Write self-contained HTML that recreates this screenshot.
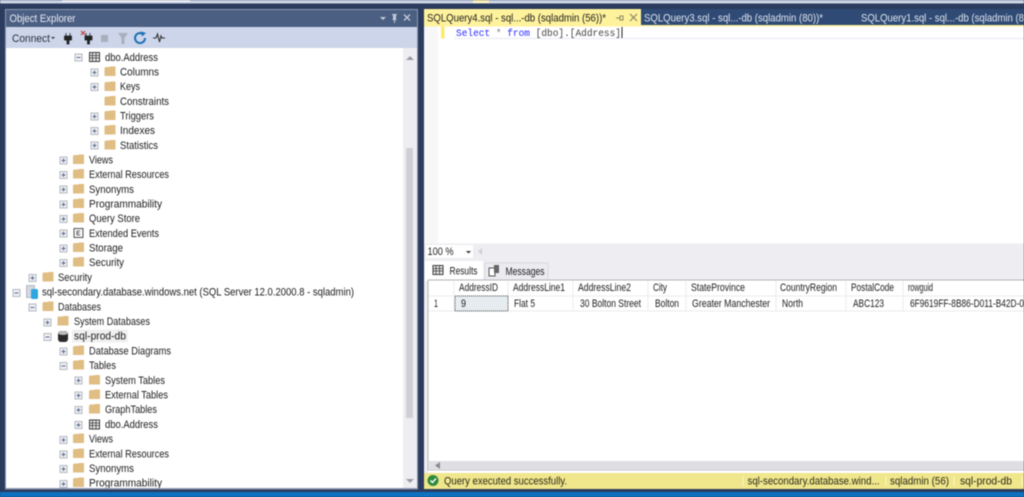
<!DOCTYPE html>
<html><head><meta charset="utf-8"><title>SSMS</title>
<style>
html,body{margin:0;padding:0;background:#2b3c5e;width:1024px;height:497px;overflow:hidden}
svg{display:block;filter:blur(.4px)}
text{font-family:"Liberation Sans",sans-serif;font-size:11.2px;fill:#1c1c1c}
.m{font-family:"Liberation Mono",monospace;font-size:10.500px}
</style></head><body>
<svg width="1024" height="497" viewBox="0 0 1024 497" xmlns="http://www.w3.org/2000/svg">
<defs>
<g id="p"><rect x="-3.500" y="-3.500" width="7" height="7" fill="#eef0f5" stroke="#b4b8c0"/><path d="M-2 0H2M0-2V2" stroke="#5a6a88"/></g>
<g id="n"><rect x="-3.500" y="-3.500" width="7" height="7" fill="#eef0f5" stroke="#b4b8c0"/><path d="M-2 0H2" stroke="#5a6a88"/></g>
<g id="f"><path d="M-5.500-3.500L-4.500-4.500H-0.500L0.500-5H5.500V4.500H-5.500Z" fill="#e0bd82"/></g>
<g id="t"><rect x="-5" y="-4.500" width="10" height="9" fill="#e8e8e8" stroke="#3c3c3c"/><path d="M-5-1.500H5M-5 1H5M-2-4V4M1.500-4V4" stroke="#3c3c3c" stroke-width=".8"/></g>
</defs>
<rect width="1024" height="497" fill="#2b3c5e"/>
<rect width="1024" height="3.500" fill="#ccd3e4"/>
<rect x="62" width="128" height="1.500" fill="#fff"/>
<rect x="473" width="16" height="3" fill="#fff0b8"/>
<rect y="492" width="1024" height="5" fill="#0e70c0"/>

<!-- object explorer -->
<rect x="5" y="9" width="413" height="480" fill="#8c98b2"/>
<rect x="6" y="10" width="411" height="17" fill="#4b5f83"/>
<rect x="6" y="27" width="411" height="21" fill="#ccd5ea"/>
<rect x="6" y="48" width="411" height="440" fill="#fff"/>
<rect x="403" y="48" width="14" height="440" fill="#eeeef2"/>
<rect x="406" y="148" width="7" height="270" fill="#cfcfd5"/>
<path d="M406 60L410 56L414 60ZM406 479L414 479L410 483Z" fill="#9a9aa3"/>
<text x="9.500" y="22" style="fill:#e6eaf2" textLength="66" lengthAdjust="spacingAndGlyphs">Object Explorer</text>
<path d="M380 17H386L383 20ZM392 14H397V15H396V19L397 20H395V23H394V20H392L393 19V15H392Z" fill="#c4cbda"/>
<path d="M404 14.500L410 20.500M410 14.500L404 20.500" stroke="#c4cbda" stroke-width="1.300"/>

<text x="12" y="42" style="fill:#2a3040" textLength="38" lengthAdjust="spacingAndGlyphs">Connect</text>
<path d="M51 37H55L53 39Z" fill="#333"/>
<path d="M66 33V36M70 33V36M64.500 36H71.500V40H69V44H67V40H64.500Z" fill="#222" stroke="#222" stroke-width=".8"/>
<path d="M81 31L85 35M85 31L81 35" stroke="#c0392b"/>
<path d="M86 33V36M90 33V36M85 36H92V40H89.500V44H87.500V40H85Z" fill="#222" stroke="#222" stroke-width=".8"/>
<rect x="101" y="35" width="7" height="7" fill="#a9afbd"/>
<path d="M118 33H128L124.500 38V44H121.500V38Z" fill="#a9afbd"/>
<path d="M143.500 34.500A5 5 0 1 0 145 38" fill="none" stroke="#1b6fb5" stroke-width="2"/><path d="M141 31.500L146 33L142 36.500Z" fill="#1b6fb5"/>
<path d="M153 38H156L157.500 34L159.500 42L161 36L162 38H165" fill="none" stroke="#333" stroke-width="1.100"/>

<use href="#n" x="78.500" y="57.500"/><use href="#t" x="94.500" y="57"/>
<text x="105" y="61" textLength="53" lengthAdjust="spacingAndGlyphs">dbo.Address</text>
<use href="#p" x="94.500" y="72.500"/><use href="#f" x="110" y="71.500"/><text x="120" y="75.500" textLength="39" lengthAdjust="spacingAndGlyphs">Columns</text>
<use href="#p" x="94.500" y="87"/><use href="#f" x="110" y="86.500"/><text x="120" y="90" textLength="20" lengthAdjust="spacingAndGlyphs">Keys</text>
<use href="#f" x="110" y="101"/><text x="120" y="105" textLength="49" lengthAdjust="spacingAndGlyphs">Constraints</text>
<use href="#p" x="94.500" y="116.500"/><use href="#f" x="110" y="115.500"/><text x="120" y="119.500" textLength="34" lengthAdjust="spacingAndGlyphs">Triggers</text>
<use href="#p" x="94.500" y="131"/><use href="#f" x="110" y="130"/><text x="120" y="134" textLength="35" lengthAdjust="spacingAndGlyphs">Indexes</text>
<use href="#p" x="94.500" y="145.500"/><use href="#f" x="110" y="145"/><text x="120" y="149" textLength="38" lengthAdjust="spacingAndGlyphs">Statistics</text>
<use href="#p" x="63.500" y="160.500"/><use href="#f" x="78.500" y="159.500"/><text x="89" y="163.500" textLength="24" lengthAdjust="spacingAndGlyphs">Views</text>
<use href="#p" x="63.500" y="175"/><use href="#f" x="78.500" y="174"/><text x="89" y="178" textLength="80" lengthAdjust="spacingAndGlyphs">External Resources</text>
<use href="#p" x="63.500" y="189.500"/><use href="#f" x="78.500" y="189"/><text x="89" y="193" textLength="45" lengthAdjust="spacingAndGlyphs">Synonyms</text>
<use href="#p" x="63.500" y="204.500"/><use href="#f" x="78.500" y="203.500"/><text x="89" y="207.500" textLength="73" lengthAdjust="spacingAndGlyphs">Programmability</text>
<use href="#p" x="63.500" y="219"/><use href="#f" x="78.500" y="218"/><text x="89" y="222" textLength="51" lengthAdjust="spacingAndGlyphs">Query Store</text>
<use href="#p" x="63.500" y="233.500"/><rect x="74" y="228.500" width="9" height="9" fill="#f4f4f4" stroke="#555"/><path d="M77 231H80M77 233H79.500M77 235H80M77 231V235" stroke="#444" fill="none" stroke-width=".8"/><text x="89" y="237" textLength="70" lengthAdjust="spacingAndGlyphs">Extended Events</text>
<use href="#p" x="63.500" y="248.500"/><use href="#f" x="78.500" y="247.500"/><text x="89" y="251.500" textLength="34" lengthAdjust="spacingAndGlyphs">Storage</text>
<use href="#p" x="63.500" y="263"/><use href="#f" x="78.500" y="262"/><text x="89" y="266" textLength="35" lengthAdjust="spacingAndGlyphs">Security</text>
<use href="#p" x="32.500" y="278"/><use href="#f" x="48" y="277"/><text x="58" y="281" textLength="34" lengthAdjust="spacingAndGlyphs">Security</text>
<use href="#n" x="16.500" y="293"/>
<rect x="26.500" y="285.500" width="8" height="12" fill="#d4d8e0" stroke="#a0a6b2" stroke-width=".7"/><rect x="31" y="289" width="7" height="10" rx="1.500" fill="#2ea6df"/>
<text x="42" y="295.500" textLength="312" lengthAdjust="spacingAndGlyphs">sql-secondary.database.windows.net (SQL Server 12.0.2000.8 - sqladmin)</text>
<use href="#n" x="32.500" y="307.500"/><use href="#f" x="48" y="306.500"/><text x="58" y="310.500" textLength="43" lengthAdjust="spacingAndGlyphs">Databases</text>
<use href="#p" x="47.500" y="322.500"/><use href="#f" x="63" y="321"/><text x="74" y="325" textLength="76" lengthAdjust="spacingAndGlyphs">System Databases</text>
<use href="#n" x="47.500" y="337"/>
<rect x="72" y="329.500" width="56" height="13" fill="#f0f0f0"/>
<rect x="58" y="331" width="10" height="11" rx="3" fill="#2a2a2a"/><ellipse cx="63" cy="333" rx="5" ry="2" fill="#bbb"/>
<text x="74" y="339.500" textLength="52" lengthAdjust="spacingAndGlyphs">sql-prod-db</text>
<use href="#p" x="63.500" y="351.500"/><use href="#f" x="78.500" y="350.500"/><text x="89" y="354.500" textLength="82" lengthAdjust="spacingAndGlyphs">Database Diagrams</text>
<use href="#n" x="63.500" y="366"/><use href="#f" x="78.500" y="365"/><text x="89" y="369" textLength="27" lengthAdjust="spacingAndGlyphs">Tables</text>
<use href="#p" x="78.500" y="380.500"/><use href="#f" x="94.500" y="380"/><text x="105" y="384" textLength="60" lengthAdjust="spacingAndGlyphs">System Tables</text>
<use href="#p" x="78.500" y="395.500"/><use href="#f" x="94.500" y="394.500"/><text x="105" y="398.500" textLength="63" lengthAdjust="spacingAndGlyphs">External Tables</text>
<use href="#p" x="78.500" y="410"/><use href="#f" x="94.500" y="409"/><text x="105" y="413" textLength="52" lengthAdjust="spacingAndGlyphs">GraphTables</text>
<use href="#p" x="78.500" y="425"/><use href="#t" x="94.500" y="424.500"/><text x="105" y="428" textLength="53" lengthAdjust="spacingAndGlyphs">dbo.Address</text>
<use href="#p" x="63.500" y="440"/><use href="#f" x="78.500" y="438.500"/><text x="89" y="442.500" textLength="24" lengthAdjust="spacingAndGlyphs">Views</text>
<use href="#p" x="63.500" y="454.500"/><use href="#f" x="78.500" y="453.500"/><text x="89" y="457.500" textLength="80" lengthAdjust="spacingAndGlyphs">External Resources</text>
<use href="#p" x="63.500" y="469"/><use href="#f" x="78.500" y="468"/><text x="89" y="472" textLength="45" lengthAdjust="spacingAndGlyphs">Synonyms</text>
<use href="#p" x="63.500" y="484"/><use href="#f" x="78.500" y="482.500"/><text x="89" y="486.500" textLength="73" lengthAdjust="spacingAndGlyphs">Programmability</text>
<rect x="5" y="488" width="413" height="1.500" fill="#8c98b2"/>

<!-- documents -->
<rect x="424" y="9" width="600" height="17" fill="#2f4a74"/>
<rect x="424" y="9" width="217" height="17" fill="#fff29d"/>
<rect x="424" y="25" width="600" height="1.500" fill="#fff29d"/>
<rect x="424" y="26.500" width="600" height="217" fill="#fff"/>
<rect x="424" y="26.500" width="14" height="217" fill="#f7f7f9"/>
<rect x="441" y="26.500" width="3.500" height="12" fill="#ffe96b"/>
<path d="M454 38.500H1024" stroke="#ebe9f3"/>
<text x="427" y="21.500" style="fill:#1e1e1e" textLength="179" lengthAdjust="spacingAndGlyphs">SQLQuery4.sql - sql...-db (sqladmin (56))*</text>
<path d="M616 18H620M620 16V20H623V16Z" fill="none" stroke="#8a8660"/>
<path d="M630 14L637 21M637 14L630 21" stroke="#8a8660" stroke-width="1.200"/>
<text x="644" y="21.500" style="fill:#dfe5f0" textLength="179" lengthAdjust="spacingAndGlyphs">SQLQuery3.sql - sql...-db (sqladmin (80))*</text>
<text x="861" y="21.500" style="fill:#dfe5f0" textLength="163" lengthAdjust="spacingAndGlyphs">SQLQuery1.sql - sql...-db (sqladmin (8</text>
<text class="m" x="456" y="36" textLength="165" lengthAdjust="spacingAndGlyphs" xml:space="preserve"><tspan fill="#2a2aff">Select</tspan> <tspan fill="#777">*</tspan> <tspan fill="#2a2aff">from</tspan> <tspan fill="#444">[dbo].[Address]</tspan></text>
<rect x="621.500" y="27" width="1" height="11" fill="#222"/>

<!-- results -->
<rect x="424" y="243.500" width="600" height="230" fill="#eeeef2"/>
<rect x="426" y="245" width="47" height="13" fill="#fff"/>
<path d="M466 251H471L468.500 253.500Z" fill="#333"/>
<path d="M482 248V255L478 251.500Z" fill="#d0d0d6"/>
<rect x="425" y="261" width="58" height="20" fill="#fff"/>
<rect x="485" y="263" width="63" height="17" fill="#ececf0" stroke="#d8d8dd"/>
<rect x="428" y="280" width="620" height="190" fill="#fff" stroke="#b4b4bb"/>
<rect x="429" y="461" width="595" height="9" fill="#dedee3"/>
<path d="M440 462V469L435 465.500Z" fill="#8a8a92"/>
<rect x="428" y="470.500" width="596" height="3" fill="#fff"/>
<path d="M454 281V311M508 281V311M573 281V311M648 281V311M686 281V311M776 281V311M846 281V311M903 281V311M428.500 296H1024M428.500 311H1024" stroke="#ececf0"/>
<rect x="455" y="296" width="53" height="15" fill="#e6ecf0" stroke="#444" stroke-dasharray="1 1"/>
<text x="427.500" y="255" textLength="26" lengthAdjust="spacingAndGlyphs">100 %</text>
<use href="#t" x="438" y="270"/>
<text x="449.500" y="274.500" textLength="28" lengthAdjust="spacingAndGlyphs">Results</text>
<rect x="489" y="268" width="6" height="8" fill="#fff" stroke="#555"/><rect x="494" y="265" width="5" height="8" fill="#666"/>
<text x="505.500" y="275" textLength="39" lengthAdjust="spacingAndGlyphs">Messages</text>
<text x="459" y="291" textLength="39" lengthAdjust="spacingAndGlyphs">AddressID</text>
<text x="513" y="291" textLength="52" lengthAdjust="spacingAndGlyphs">AddressLine1</text>
<text x="578" y="291" textLength="53" lengthAdjust="spacingAndGlyphs">AddressLine2</text>
<text x="653" y="291" textLength="14" lengthAdjust="spacingAndGlyphs">City</text>
<text x="691" y="291" textLength="54" lengthAdjust="spacingAndGlyphs">StateProvince</text>
<text x="780" y="291" textLength="57" lengthAdjust="spacingAndGlyphs">CountryRegion</text>
<text x="851" y="291" textLength="43" lengthAdjust="spacingAndGlyphs">PostalCode</text>
<text x="908" y="291" textLength="25" lengthAdjust="spacingAndGlyphs">rowguid</text>
<text x="434" y="307" textLength="4" lengthAdjust="spacingAndGlyphs">1</text>
<text x="461" y="307" textLength="5" lengthAdjust="spacingAndGlyphs">9</text>
<text x="514" y="307" textLength="21" lengthAdjust="spacingAndGlyphs">Flat 5</text>
<text x="580" y="307" textLength="61" lengthAdjust="spacingAndGlyphs">30 Bolton Street</text>
<text x="655" y="307" textLength="24" lengthAdjust="spacingAndGlyphs">Bolton</text>
<text x="692" y="307" textLength="78" lengthAdjust="spacingAndGlyphs">Greater Manchester</text>
<text x="782" y="307" textLength="21" lengthAdjust="spacingAndGlyphs">North</text>
<text x="853" y="307" textLength="31" lengthAdjust="spacingAndGlyphs">ABC123</text>
<text x="910" y="307" textLength="114" lengthAdjust="spacingAndGlyphs">6F9619FF-8B86-D011-B42D-0</text>

<!-- status -->
<rect x="424" y="473" width="600" height="16" fill="#f0e68c"/>
<circle cx="433" cy="480.500" r="5.500" fill="#2e8b3d"/>
<path d="M430.500 480.500L432.500 482.500L436 478.500" fill="none" stroke="#fff" stroke-width="1.400"/>
<path d="M743 476V486M886 476V486M954 476V486M1022 476V486" stroke="#fbf6c8"/>
<text x="444" y="484.500" style="fill:#2b2b1a" textLength="123" lengthAdjust="spacingAndGlyphs">Query executed successfully.</text>
<text x="747.500" y="484.500" style="fill:#2b2b1a" textLength="132" lengthAdjust="spacingAndGlyphs">sql-secondary.database.wind...</text>
<text x="890" y="484.500" style="fill:#2b2b1a" textLength="59" lengthAdjust="spacingAndGlyphs">sqladmin (56)</text>
<text x="960" y="484.500" style="fill:#2b2b1a" textLength="52" lengthAdjust="spacingAndGlyphs">sql-prod-db</text>
</svg>
</body></html>
